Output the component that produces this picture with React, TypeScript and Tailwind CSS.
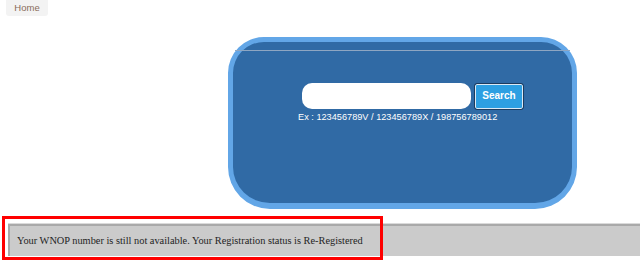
import React from 'react';

const App = () => {
    return (
        <div className="w-[640px] h-[266px] bg-white overflow-hidden relative" style={{ fontFamily: '"Liberation Sans", Arial, sans-serif' }}>
            {/* Home tab */}
            <div className="ml-[6px] w-[42px] h-[16px] bg-[#f3f3f3] rounded-b-[3px] flex items-center justify-center">
                <span className="text-[9.5px] text-[#8a6c5a] leading-none">Home</span>
            </div>

            {/* Search panel */}
            <div className="ml-[228px] mt-[21px] w-[349px] h-[172px] bg-[#306aa5] border-[5px] border-b-[6px] border-[#62a6e7] rounded-t-[36px] rounded-b-[42px]">
                <div className="mt-[8px] mx-[2px] h-px bg-[#8ea6c2]" />
                <div className="ml-[69px] mt-[32px] flex items-center gap-[4px]">
                    <input
                        type="text"
                        className="w-[169px] h-[26px] bg-white rounded-[10px] outline-none border-0"
                    />
                    <button className="w-[48px] h-[25px] bg-[#2d9fe2] border border-[#dbe9f5] outline outline-1 outline-[#1d3b5e] rounded-[2px] text-white text-[10px] font-bold leading-none">
                        Search
                    </button>
                </div>
                <p className="ml-[65px] mt-[2px] text-[9.2px] text-white leading-[12px]">
                    Ex : 123456789V / 123456789X / 198756789012
                </p>
            </div>

            {/* Status message */}
            <div className="ml-[8px] mt-[14px] h-[33px] bg-[#cbcbcb] border-t border-[#dadada]">
                <div className="h-full border-t-[2px] border-l-[2px] border-[#a9a9a9] flex items-center pl-[7px]">
                    <span className="text-[10.35px] text-[#1f1f1f]" style={{ fontFamily: '"Liberation Serif", "Times New Roman", serif' }}>
                        Your WNOP number is still not available. Your Registration status is Re-Registered
                    </span>
                </div>
            </div>

            {/* Annotation box */}
            <div className="absolute left-[2px] top-[216px] w-[381px] h-[44px] border-[3px] border-[#ff0000] pointer-events-none" />
        </div>
    );
};

export default App;
